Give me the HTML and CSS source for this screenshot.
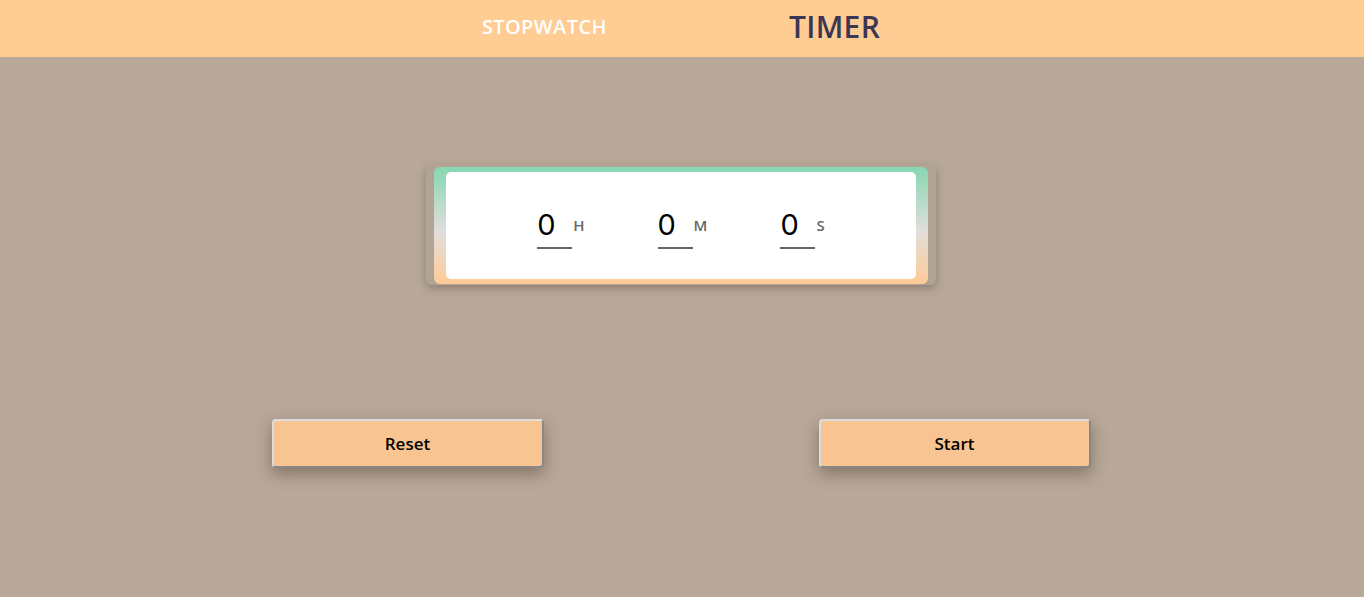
FILE: index.html
```html
<!DOCTYPE html>
<html>
<head>
<meta charset="utf-8">
<link rel="stylesheet" href="styles.css">
</head>
<body>
<header class="nav">
  <span class="nav-item">STOPWATCH</span>
  <span class="nav-item active">TIMER</span>
</header>
<main class="main">
  <div class="card-outer">
    <div class="card-grad">
      <div class="card">
        <div class="field"><span class="num">0</span><span class="unit">H</span></div>
        <div class="field"><span class="num">0</span><span class="unit">M</span></div>
        <div class="field"><span class="num">0</span><span class="unit">S</span></div>
      </div>
    </div>
  </div>
  <div class="buttons">
    <button class="btn">Reset</button>
    <button class="btn">Start</button>
  </div>
</main>
</body>
</html>
```
FILE: styles.css
```css
html, body { margin: 0; padding: 0; }
body {
  background: #b8a899;
  font-family: "Open Sans", "Liberation Sans", sans-serif;
  height: 597px;
  overflow: hidden;
}
.nav {
  height: 57px;
  background: #ffcc94;
  display: flex;
  align-items: center;
  justify-content: center;
  gap: 182px;
  padding-bottom: 4px;
  box-sizing: border-box;
  padding-right: 2px;
}
.nav-item {
  color: #ffffff;
  font-size: 20px;
  font-weight: 600;
  letter-spacing: 0.4px;
}
.nav-item.active {
  color: #3b3654;
  font-size: 30px;
  font-weight: 600;
  letter-spacing: 0.3px;
}
.main {
  display: flex;
  flex-direction: column;
  align-items: center;
  padding-right: 2px;
}
.card-outer {
  margin-top: 108px;
  width: 494px;
  padding: 2px 8px 1px 8px;
  background: #b1a395;
  border-radius: 6px;
  box-shadow: 0 3px 8px rgba(60, 45, 30, 0.35);
}
.card-grad {
  padding: 5px 12px 5px 12px;
  border-radius: 6px;
  background: linear-gradient(180deg, #86d7b2 0%, #e1dedb 55%, #ffcb96 100%);
}
.card {
  height: 107px;
  background: #ffffff;
  border-radius: 5px;
  display: flex;
  justify-content: center;
  align-items: center;
  gap: 73px;
}
.field {
  display: flex;
  align-items: center;
  padding-top: 2px;
}
.num {
  width: 35px;
  border-bottom: 2px solid #666666;
  color: #000000;
  font-family: "Inter", "Liberation Sans", sans-serif;
  font-size: 29px;
  line-height: 40px;
  padding-bottom: 2px;
}
.unit {
  margin-left: 1px;
  color: #666666;
  font-size: 15px;
  font-weight: 600;
  margin-top: -3px;
}
.buttons {
  margin-top: 134px;
  display: flex;
  gap: 275px;
}
.btn {
  box-sizing: border-box;
  width: 272px;
  height: 49px;
  background: #f8c592;
  border: 2px outset #dcdcdc;
  border-radius: 4px;
  box-shadow: 0 6px 16px rgba(60, 45, 30, 0.42);
  font-family: "Open Sans", "Liberation Sans", sans-serif;
  font-size: 17px;
  font-weight: 600;
  color: #000000;
}
```
